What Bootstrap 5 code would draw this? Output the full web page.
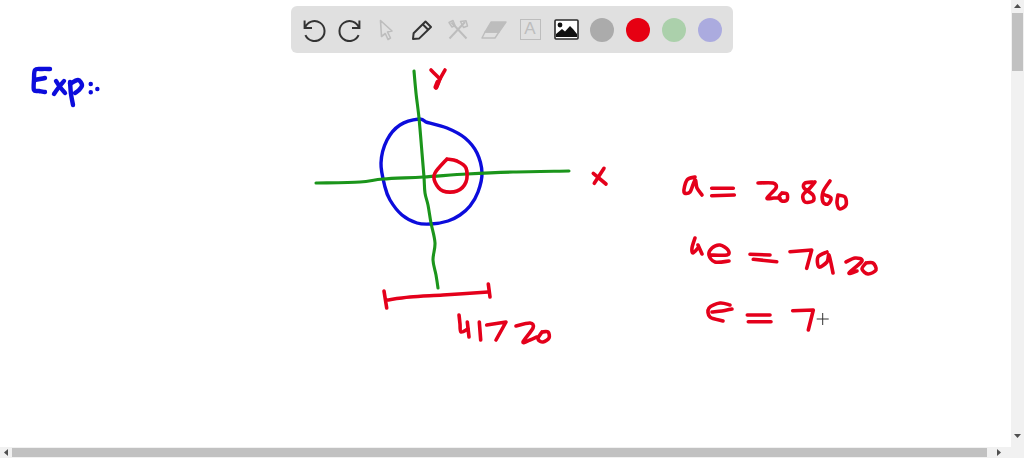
<!DOCTYPE html>
<html lang="en">
<head>
<meta charset="utf-8">
<title>Whiteboard</title>
<link href="https://cdn.jsdelivr.net/npm/bootstrap@5.3.0/dist/css/bootstrap.min.css" rel="stylesheet">
<style>
html,body{margin:0;height:458px;overflow:hidden;background:#fff;font-family:"Liberation Sans",Arial,sans-serif}
.wb-app{width:1024px;height:458px}
.wb-board{height:447px}
.wb-canvas{display:block;width:1011px;height:447px;background:#fff}
.wb-canvas path{fill:none;stroke-linecap:round;stroke-linejoin:round}
.ink-red{stroke:#e4001b;stroke-width:3.6}
.ink-blue{stroke:#0c0cdc;stroke-width:3.4}
.ink-blue-heavy{stroke:#0c0cdc;stroke-width:4.4}
.ink-green{stroke:#1b951b;stroke-width:3.1}
.wb-toolbar{left:291px;top:6px;width:442px;height:47px;padding:0 5px;background:#e0e0e0;border-radius:6px}
.wb-tool{width:36px;height:47px}
.wb-tool svg{display:block}
.wb-letter{width:21px;height:21px;border:1.5px solid #bdbdbd;color:#bdbdbd;font-size:17px;line-height:18px;text-align:center}
.wb-dot{width:24px;height:24px;border-radius:50%}
.wb-vbar{width:13px;background:#f1f1f1}
.wb-hbar{height:11px;width:1011px;background:#f1f1f1}
.wb-arrow{width:11px;height:11px;flex:none}
.wb-vthumb{width:11px;height:58px;margin:2px 1px 0;background:#c1c1c1}
.wb-hthumb{width:975px;height:9px;margin:0 1px;background:#c1c1c1}
</style>
</head>
<body>
<div class="wb-app d-flex position-relative">
  <div class="d-flex flex-column">
    <div class="wb-board">
      <svg class="wb-canvas" viewBox="0 0 1011 447" xmlns="http://www.w3.org/2000/svg">
        <g class="ink-blue-heavy">
          <path data-p="50,69 42,69 35,70 34,80 34,90 39,91 45,92"/>
          <path data-p="35,80 40,79 45,78"/>
          <path data-p="56,81 60,87 65,93"/>
          <path data-p="64,81 59,87 54,94"/>
          <path data-p="70,82 71,94 73,105"/>
          <path data-p="70,84 78,80 82,85 79,90 75,93"/>
          <path d="M90.7 84h.1M90.7 92.3h.1M97.3 89h.1"/>
        </g>
        <g class="ink-blue">
          <path data-p="426,122 419,119 400,125 387,140 381,163 385,187 390,200 402,215 417,223 431,224 448,221 460,215 470,206 478,192 482,173 477,153 465,138 447,128 426,122"/>
        </g>
        <g class="ink-green">
          <path data-p="414,71 416,93 419,118 422,153 424,177 425,193 428,205 431,223 435,243 433,260 436,275 438,288"/>
          <path data-p="316,183 360,182 383,179 423,177 467,174 513,172 569,171"/>
        </g>
        <g class="ink-red">
          <path data-p="447,159 457,161 466,168 466,182 457,191 443,191 435,182 435,173 447,159"/>
          <path data-p="431,70 436,75 440,79"/>
          <path data-p="445,70 440,79 436,88"/>
          <path d="M438 82L436 87" style="stroke-width:5"/>
          <path d="M593.3 173.3L606 184M604 168.3L594.3 183.3"/>
          <path d="M384 291L386.7 308"/>
          <path data-p="387,300 410,297 443,295 488,292"/>
          <path d="M488.3 284L490 297"/>
          <path data-p="459,315 460,324 461,332 468,329"/>
          <path d="M467.3 322L469 337"/>
          <path d="M479.3 322L480.7 340"/>
          <path d="M486.7 325L506 322L496 340"/>
          <path data-p="516,326 530,323 533,328 523,342 530,340 537,337"/>
          <path data-p="542,332 548,332 549,338 543,342 538,339 542,332"/>
          <path data-p="695,177 687,180 684,192 690,192 695,180 697,188 702,195"/>
          <path d="M711.7 188.3L733.3 188.3M711.7 195.7L734.3 195"/>
          <path data-p="758,183 773,183 776,188 767,198 774,198 780,198"/>
          <path data-p="782,193 787,194 787,200 782,201 779,197 782,193"/>
          <path data-p="813,182 805,183 804,188 813,195 813,201 805,202 803,195 810,188 815,182"/>
          <path data-p="830,181 823,192 823,202 828,204 831,198 825,195"/>
          <path data-p="838,195 845,197 846,205 840,209 837,203 838,195"/>
          <path data-p="695,238 692,248 693,253 698,248"/>
          <path d="M698 245L702 254"/>
          <path data-p="710,255 727,255 728,250 720,245 712,248 709,255 715,262 729,261"/>
          <path d="M750 254.3L770 255M753.3 259.3L776.7 261.7"/>
          <path d="M790 251.7L811.7 250L806.7 268.3"/>
          <path data-p="827,252 818,257 819,267 827,262 829,255 833,273"/>
          <path data-p="846,262 855,258 862,261 849,273 857,271"/>
          <path data-p="866,263 873,263 876,270 868,274 862,269 866,263"/>
          <path data-p="730,305 720,303 709,308 710,317 723,321"/>
          <path data-p="712,312 722,311 732,309"/>
          <path d="M747.3 315L770 315M748.3 321.7L771 321.7"/>
          <path d="M792.7 310.7L813.3 310L808.3 330"/>
        </g>
        <path d="M822.7 313v12M816.7 319h12" style="stroke:#333;stroke-width:1;stroke-linecap:butt"/>
      </svg>
    </div>
    <div class="wb-hbar d-flex align-items-center">
      <div class="wb-arrow d-flex align-items-center justify-content-center">
        <svg width="5" height="7" viewBox="0 0 5 7"><path d="M5 0V7L1 3.5Z" fill="#505050"/></svg>
      </div>
      <div class="wb-hthumb"></div>
      <div class="flex-grow-1 d-flex align-items-center justify-content-center">
        <svg width="5" height="7" viewBox="0 0 5 7"><path d="M0 0V7L4 3.5Z" fill="#505050"/></svg>
      </div>
    </div>
  </div>
  <div class="wb-vbar d-flex flex-column align-items-center">
    <div class="wb-arrow d-flex align-items-center justify-content-center">
      <svg width="7" height="5" viewBox="0 0 7 5"><path d="M0 5H7L3.5 1Z" fill="#505050"/></svg>
    </div>
    <div class="wb-vthumb"></div>
    <div class="flex-grow-1"></div>
    <div class="wb-arrow d-flex align-items-center justify-content-center mb-3">
      <svg width="7" height="5" viewBox="0 0 7 5"><path d="M0 0H7L3.5 4Z" fill="#505050"/></svg>
    </div>
  </div>

  <div class="wb-toolbar position-absolute d-flex align-items-center">
    <div class="wb-tool d-flex align-items-center justify-content-center">
      <svg width="24" height="24" viewBox="0 0 24 24" fill="none" stroke="#333" stroke-width="2"><path d="M2.6 2.5V10H10M3 10A10 10 0 1 1 3.4 17.2"/></svg>
    </div>
    <div class="wb-tool d-flex align-items-center justify-content-center">
      <svg width="24" height="24" viewBox="0 0 24 24" fill="none" stroke="#333" stroke-width="2"><path d="M21.4 2.5V10H14M21 10A10 10 0 1 0 20.6 17.2"/></svg>
    </div>
    <div class="wb-tool d-flex align-items-center justify-content-center">
      <svg width="24" height="24" viewBox="0 0 24 24" fill="none" stroke="#bdbdbd" stroke-width="1.6" stroke-linejoin="round"><path d="M6.5 2.5L18 13L13.5 14L16.5 20L14 21.5L11.3 15.5L7.5 18.5Z"/></svg>
    </div>
    <div class="wb-tool d-flex align-items-center justify-content-center">
      <svg width="24" height="24" viewBox="0 0 24 24" fill="none" stroke="#333" stroke-width="2" stroke-linejoin="round"><path d="M3 21L3.6 15.3L15.5 3.5L21 9L9 20.6ZM12.7 6.3L18.2 11.8"/></svg>
    </div>
    <div class="wb-tool d-flex align-items-center justify-content-center">
      <svg width="24" height="24" viewBox="0 0 24 24" fill="none" stroke="#bdbdbd" stroke-width="2" stroke-linejoin="round"><path d="M5.5 4.5L20.5 20.5M19 4L3.5 20.5"/><path d="M14.5 3.5L20 2.8L21.5 8L17.5 9.5Z" stroke-width="1.5"/><path d="M3 4.5L7 2.5L9 7.5L6 9Z" stroke-width="1.5"/></svg>
    </div>
    <div class="wb-tool d-flex align-items-center justify-content-center">
      <svg width="26" height="24" viewBox="0 0 26 24" stroke="#bdbdbd" stroke-width="1.4" stroke-linejoin="round"><path d="M10 4H25L18 14H4Z" fill="#bdbdbd"/><path d="M4 14H18L14 20H1Z" fill="none"/></svg>
    </div>
    <div class="wb-tool d-flex align-items-center justify-content-center">
      <div class="wb-letter">A</div>
    </div>
    <div class="wb-tool d-flex align-items-center justify-content-center">
      <svg width="25" height="21" viewBox="0 0 25 21"><rect x="1" y="1" width="23" height="19" rx="1" fill="#fff" stroke="#2b2b2b" stroke-width="1.6"/><circle cx="6" cy="6" r="2.4" fill="#111"/><path d="M2 18V15L8 10L11 12.5L16 7L19 10L23 15V18Z" fill="#111"/></svg>
    </div>
    <div class="wb-tool d-flex align-items-center justify-content-center"><div class="wb-dot" style="background:#ababab"></div></div>
    <div class="wb-tool d-flex align-items-center justify-content-center"><div class="wb-dot" style="background:#e60012"></div></div>
    <div class="wb-tool d-flex align-items-center justify-content-center"><div class="wb-dot" style="background:#abd0ab"></div></div>
    <div class="wb-tool d-flex align-items-center justify-content-center"><div class="wb-dot" style="background:#ababdf"></div></div>
  </div>
</div>
<script src="https://cdn.jsdelivr.net/npm/bootstrap@5.3.0/dist/js/bootstrap.bundle.min.js"></script>
<script>
document.querySelectorAll('path[data-p]').forEach(function(el){
  var p=el.getAttribute('data-p').trim().split(' ').map(function(s){return s.split(',').map(Number)});
  var d='M'+p[0][0]+' '+p[0][1];
  for(var i=0;i<p.length-1;i++){
    var a=p[i-1]||p[i],b=p[i],c=p[i+1],e=p[i+2]||c;
    d+='C'+(b[0]+(c[0]-a[0])/6).toFixed(1)+' '+(b[1]+(c[1]-a[1])/6).toFixed(1)+' '+(c[0]-(e[0]-b[0])/6).toFixed(1)+' '+(c[1]-(e[1]-b[1])/6).toFixed(1)+' '+c[0]+' '+c[1];
  }
  el.setAttribute('d',d);
});
</script>
</body>
</html>
